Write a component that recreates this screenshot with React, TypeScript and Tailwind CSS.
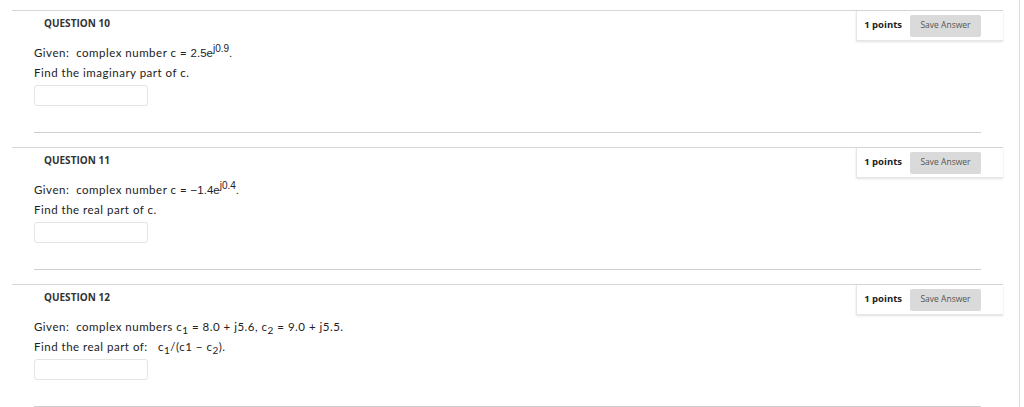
import React from 'react';

interface Question {
  num: number;
  given: React.ReactNode;
  find: React.ReactNode;
}

const questions: Question[] = [
  {
    num: 10,
    given: (
      <>
        Given:&nbsp; complex number c = <span className="font-['Liberation_Sans',sans-serif] tracking-normal">2.5e<sup className="text-[10px]">j0.9</sup>.</span>
      </>
    ),
    find: <>Find the imaginary part of c.</>,
  },
  {
    num: 11,
    given: (
      <>
        Given:&nbsp; complex number c = <span className="font-['Liberation_Sans',sans-serif] tracking-normal">−1.4e<sup className="text-[10px]">j0.4</sup>.</span>
      </>
    ),
    find: <>Find the real part of c.</>,
  },
  {
    num: 12,
    given: (
      <>
        Given:&nbsp; complex numbers c<sub className="text-[10px]">1</sub> = 8.0 + j5.6, c<sub className="text-[10px]">2</sub> = 9.0 + j5.5.
      </>
    ),
    find: (
      <>
        Find the real part of:&nbsp;&nbsp; c<sub className="text-[10px]">1</sub>/(c1 − c<sub className="text-[10px]">2</sub>).
      </>
    ),
  },
];

function QuestionBlock({ q }: { q: Question }) {
  return (
    <div className="border-t border-[#d6d6d6] pb-[14px]">
      <div className="flex justify-between">
        <h3 className="pl-8 pt-[6px] text-[10px] font-bold leading-[13px] text-[#333] font-['Open_Sans',sans-serif]">
          QUESTION {q.num}
        </h3>
        <div className="flex items-center justify-end h-[30px] w-[147px] pr-[22px] border-l border-b border-[#e6e6e6] shadow-[0_1px_2px_rgba(0,0,0,0.12)]">
          <span className="text-[9.5px] font-bold text-[#222] font-['Open_Sans',sans-serif]">1 points</span>
          <button className="ml-[8px] h-[22px] w-[71px] rounded-[2px] bg-[#dadada] text-[8.5px] text-[#555] font-['Open_Sans',sans-serif]">
            Save Answer
          </button>
        </div>
      </div>
      <div className="px-[22px] pt-[2px] text-[11.5px] tracking-[0.5px] text-[#222] font-['Lato',sans-serif]">
        <p className="leading-[20px]">{q.given}</p>
        <p className="leading-[20px]">{q.find}</p>
        <div className="mt-[2px] h-[21px] w-[114px] rounded-[3px] border border-[#e4e4e4] bg-white" />
        <div className="mt-[26px] border-t border-[#cfcfcf]" />
      </div>
    </div>
  );
}

export default function App() {
  return (
    <div className="w-[1020px] min-h-[407px] bg-white border-r border-[#dcdcdc] pl-3 pr-4 pt-[10px]">
      {questions.map(q => (
        <QuestionBlock key={q.num} q={q} />
      ))}
    </div>
  );
}
